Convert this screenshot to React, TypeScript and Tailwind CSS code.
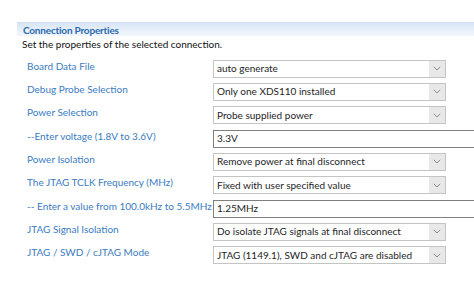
import React from 'react'

type Row = {
  label: string
  kind: 'select' | 'input'
  value: string
}

const rows: Row[] = [
  { label: 'Board Data File', kind: 'select', value: 'auto generate' },
  { label: 'Debug Probe Selection', kind: 'select', value: 'Only one XDS110 installed' },
  { label: 'Power Selection', kind: 'select', value: 'Probe supplied power' },
  { label: '--Enter voltage (1.8V to 3.6V)', kind: 'input', value: '3.3V' },
  { label: 'Power Isolation', kind: 'select', value: 'Remove power at final disconnect' },
  { label: 'The JTAG TCLK Frequency (MHz)', kind: 'select', value: 'Fixed with user specified value' },
  { label: '-- Enter a value from 100.0kHz to 5.5MHz', kind: 'input', value: '1.25MHz' },
  { label: 'JTAG Signal Isolation', kind: 'select', value: 'Do isolate JTAG signals at final disconnect' },
  { label: 'JTAG / SWD / cJTAG Mode', kind: 'select', value: 'JTAG (1149.1), SWD and cJTAG are disabled' },
]

const Chevron: React.FC = () => (
  <svg width="8" height="5" viewBox="0 0 8 5" fill="none">
    <path d="M0.8 0.8 L4 4 L7.2 0.8" stroke="#8a8a8a" strokeWidth="1" />
  </svg>
)

const SelectBox: React.FC<{ value: string }> = ({ value }) => (
  <div className="flex h-[18px] w-[233px] border border-[#c4c4c4] bg-white">
    <div className="flex flex-1 items-center pl-[3px] text-[#1e1e1e] whitespace-nowrap overflow-hidden">
      {value}
    </div>
    <div className="flex w-[16px] items-center justify-center bg-[#e8e8e8]">
      <Chevron />
    </div>
  </div>
)

const TextBox: React.FC<{ value: string }> = ({ value }) => (
  <div className="flex h-[18px] w-[270px] shrink-0 items-center border border-[#7f7f7f] bg-white pl-[3px] text-[#1e1e1e]">
    {value}
  </div>
)

const App: React.FC = () => {
  return (
    <div className="h-[286px] w-[474px] overflow-hidden bg-white pl-[17px] pt-[22px] font-['Lato',sans-serif] text-[10px]">
      {/* section header */}
      <div className="flex h-[14px] items-center border-t border-[#cfdff0] bg-gradient-to-b from-[#d8e6f5] to-[#f3f7fc] pl-[6px]">
        <span className="font-bold tracking-[-0.2px] text-[#2a6aad] leading-none">Connection Properties</span>
      </div>
      <div className="flex h-[17px] items-center pl-[5px] text-[#111]">
        Set the properties of the selected connection.
      </div>

      <div className="flex flex-col pt-[4px]">
        {rows.map((row) => (
          <div key={row.label} className="flex h-[23.33px] items-center">
            <div className="w-[196px] shrink-0 pb-[5px] pl-[10px] text-[#3b7bc2] whitespace-nowrap">
              {row.label}
            </div>
            {row.kind === 'select' ? <SelectBox value={row.value} /> : <TextBox value={row.value} />}
          </div>
        ))}
      </div>
    </div>
  )
}

export default App
